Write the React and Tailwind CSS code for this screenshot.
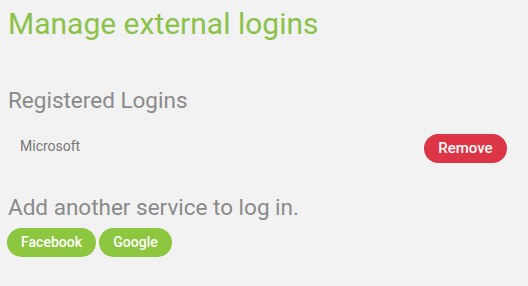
import React from "react";

const font = { fontFamily: "Roboto, 'Noto Sans', sans-serif" };

const App = () => {
   return (
      <div className="w-[528px] h-[286px] bg-[#f2f2f2] px-2 pt-[6px]" style={font}>
         <h1 className="text-[30px] leading-[36px] text-[#8bc34a] font-normal">Manage external logins</h1>
         <h3 className="mt-[46px] text-[22.5px] leading-[24px] text-[#8a8a8a]">Registered Logins</h3>
         <div className="mt-[22px] flex items-center justify-between pl-3 pr-[13px] h-[29px]">
            <span className="text-[14px] text-[#777] -mt-[5px]">Microsoft</span>
            <button className="h-[29px] w-[83px] rounded-full bg-[#dc3545] text-white text-[15px] font-medium">
               Remove
            </button>
         </div>
         <h4 className="mt-[31px] text-[22.5px] leading-[26px] text-[#8a8a8a]">Add another service to log in.</h4>
         <div className="mt-[8px] flex gap-[3px] -ml-px">
            <button className="h-[29px] w-[89px] rounded-full bg-[#8dc63f] text-white text-[14px] font-medium">Facebook</button>
            <button className="h-[29px] w-[73px] rounded-full bg-[#8dc63f] text-white text-[14px] font-medium">Google</button>
         </div>
      </div>
   );
};

export default App;
